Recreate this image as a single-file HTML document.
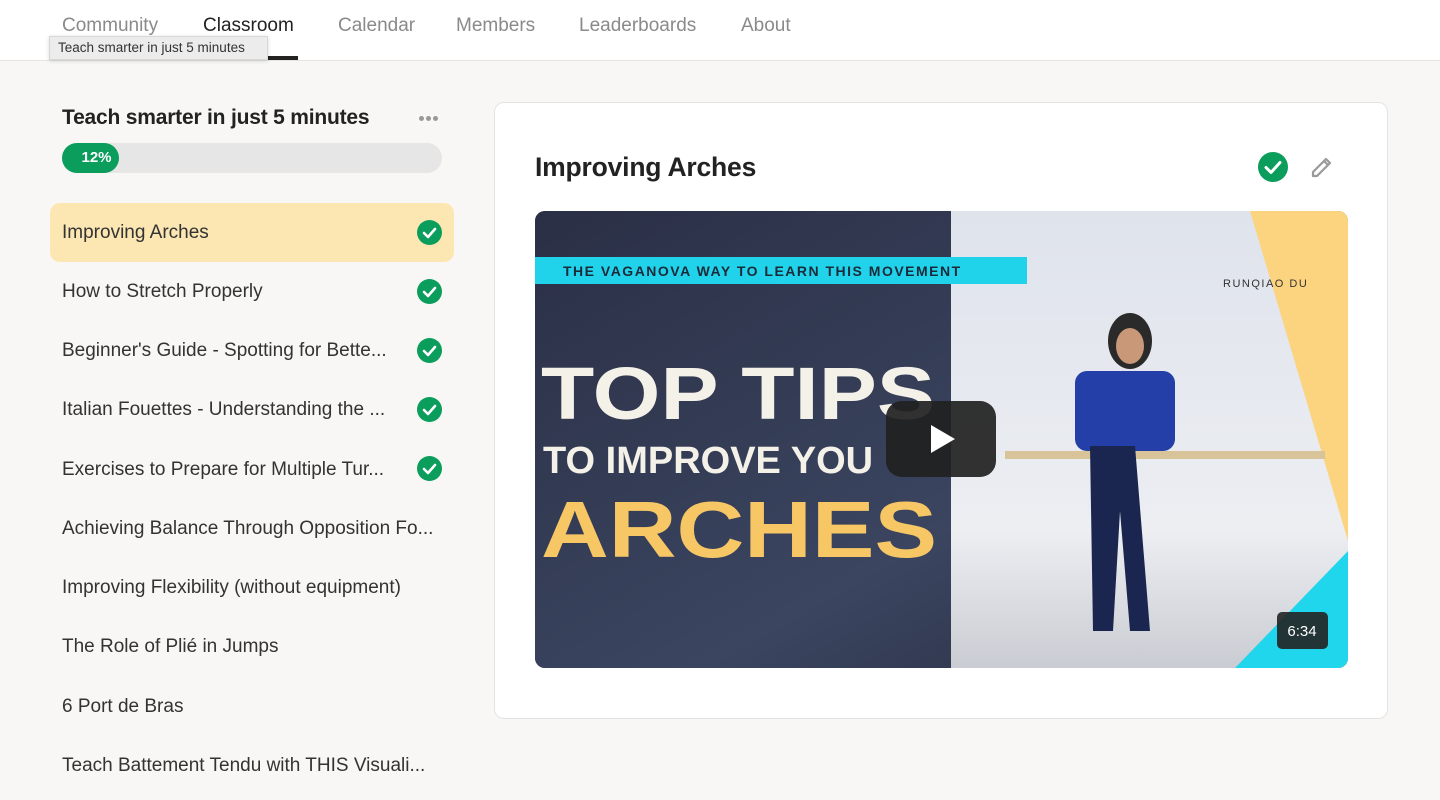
<!DOCTYPE html>
<html><head><meta charset="utf-8"><style>
*{margin:0;padding:0;box-sizing:border-box}
body{width:1440px;height:800px;overflow:hidden;background:#f8f7f5;font-family:"Liberation Sans",Arial,sans-serif;position:relative}
.hdr{position:absolute;left:0;top:0;width:1440px;height:61px;background:#fff;border-bottom:1px solid #e4e4e4}
.nav{position:absolute;top:15px;font-size:19px;color:#8a8a8a}
.tip{position:absolute;left:49px;top:36px;width:219px;height:24px;background:#ececec;border:1px solid #d8d8d8;box-shadow:0 1px 4px rgba(0,0,0,.15);font-size:13.5px;color:#333;padding:3px 0 0 8px;z-index:3}
.under{position:absolute;left:203px;top:56px;width:95px;height:4px;background:#222}
.title{position:absolute;left:62px;top:106px;font-size:21px;font-weight:bold;color:#222;letter-spacing:-0.2px}
.dots{position:absolute;left:419px;top:116px;display:flex;gap:2px}
.dots i{display:block;width:5px;height:5px;border-radius:50%;background:#999}
.bar{position:absolute;left:62px;top:143px;width:380px;height:30px;border-radius:15px;background:#e6e6e6}
.bar div{width:57px;height:30px;border-radius:15px;background:#0a9d5c;color:#fff;font-weight:bold;font-size:15px;text-align:center;line-height:30px;padding-left:12px}
.item{position:absolute;left:50px;width:404px;height:59px;font-size:19px;color:#333;padding-left:12px;line-height:59px}
.item.act{background:#fce7b3;border-radius:10px}
.ck{position:absolute;left:417px;width:25px;height:25px}
.card{position:absolute;left:494px;top:102px;width:894px;height:617px;background:#fff;border:1px solid #e3e3e3;border-radius:10px}
.ct{position:absolute;left:535px;top:152px;font-size:26.5px;font-weight:bold;color:#222;letter-spacing:-0.2px}
.vid{position:absolute;left:535px;top:211px;width:813px;height:457px;border-radius:10px;overflow:hidden;background:#2c3247}
</style></head><body>
<div class="hdr"></div>
<div class="nav" style="left:62px">Community</div>
<div class="nav" style="left:203px;color:#222">Classroom</div>
<div class="nav" style="left:338px">Calendar</div>
<div class="nav" style="left:456px">Members</div>
<div class="nav" style="left:579px">Leaderboards</div>
<div class="nav" style="left:741px">About</div>
<div class="under"></div>
<div class="tip">Teach smarter in just 5 minutes</div>

<div class="title">Teach smarter in just 5 minutes</div>
<div class="dots"><i></i><i></i><i></i></div>
<div class="bar"><div>12%</div></div>

<div class="item act" style="top:203px">Improving Arches</div>
<div class="item" style="top:262px">How to Stretch Properly</div>
<div class="item" style="top:321px">Beginner's Guide - Spotting for Bette...</div>
<div class="item" style="top:380px">Italian Fouettes - Understanding the ...</div>
<div class="item" style="top:440px">Exercises to Prepare for Multiple Tur...</div>
<div class="item" style="top:499px">Achieving Balance Through Opposition Fo...</div>
<div class="item" style="top:558px">Improving Flexibility (without equipment)</div>
<div class="item" style="top:617px">The Role of Plié in Jumps</div>
<div class="item" style="top:677px">6 Port de Bras</div>
<div class="item" style="top:736px">Teach Battement Tendu with THIS Visuali...</div>

<svg class="ck" style="top:220px" viewBox="0 0 25 25"><circle cx="12.5" cy="12.5" r="12.5" fill="#0a9d5c"/><path d="M7 13l4 4 7-8" stroke="#fff" stroke-width="2.6" fill="none" stroke-linecap="round" stroke-linejoin="round"/></svg>
<svg class="ck" style="top:279px" viewBox="0 0 25 25"><circle cx="12.5" cy="12.5" r="12.5" fill="#0a9d5c"/><path d="M7 13l4 4 7-8" stroke="#fff" stroke-width="2.6" fill="none" stroke-linecap="round" stroke-linejoin="round"/></svg>
<svg class="ck" style="top:338px" viewBox="0 0 25 25"><circle cx="12.5" cy="12.5" r="12.5" fill="#0a9d5c"/><path d="M7 13l4 4 7-8" stroke="#fff" stroke-width="2.6" fill="none" stroke-linecap="round" stroke-linejoin="round"/></svg>
<svg class="ck" style="top:397px" viewBox="0 0 25 25"><circle cx="12.5" cy="12.5" r="12.5" fill="#0a9d5c"/><path d="M7 13l4 4 7-8" stroke="#fff" stroke-width="2.6" fill="none" stroke-linecap="round" stroke-linejoin="round"/></svg>
<svg class="ck" style="top:456px" viewBox="0 0 25 25"><circle cx="12.5" cy="12.5" r="12.5" fill="#0a9d5c"/><path d="M7 13l4 4 7-8" stroke="#fff" stroke-width="2.6" fill="none" stroke-linecap="round" stroke-linejoin="round"/></svg>

<div class="card"></div>
<div class="ct">Improving Arches</div>
<svg style="position:absolute;left:1258px;top:152px" width="30" height="30" viewBox="0 0 30 30"><circle cx="15" cy="15" r="15" fill="#0a9d5c"/><path d="M8 15.5l5 5 9-10" stroke="#fff" stroke-width="3" fill="none" stroke-linecap="round" stroke-linejoin="round"/></svg>
<svg style="position:absolute;left:1308px;top:153px" width="28" height="28" viewBox="0 0 28 28"><path d="M5 19L18 6l4 4L9 23H5z M16 8l4 4" stroke="#999" stroke-width="2.2" fill="none" stroke-linejoin="round"/></svg>

<div class="vid">
<svg width="813" height="457" viewBox="0 0 813 457">
<defs><linearGradient id="g" x1="0" y1="0" x2="1" y2="1"><stop offset="0" stop-color="#2a2f45"/><stop offset=".6" stop-color="#3b4560"/><stop offset="1" stop-color="#262a3c"/></linearGradient>
<linearGradient id="r" x1="0" y1="0" x2="0" y2="1"><stop offset="0" stop-color="#dfe3ec"/><stop offset=".7" stop-color="#eceef2"/><stop offset="1" stop-color="#c9ccd2"/></linearGradient></defs>
<rect width="813" height="457" fill="url(#g)"/>
<rect x="416" width="397" height="457" fill="url(#r)"/>
<polygon points="715,0 813,0 813,330" fill="#fcd37e"/>
<polygon points="700,457 813,340 813,457" fill="#1fd6ec"/>
<rect x="0" y="46" width="492" height="27" fill="#21d3ea"/>
<text x="28" y="65" font-family="Liberation Sans" font-weight="bold" font-size="14" fill="#1b2a3a" letter-spacing="1.5">THE VAGANOVA WAY  TO LEARN THIS MOVEMENT</text>
<text x="6" y="208" font-family="Liberation Sans" font-weight="bold" font-size="74" fill="#f4f1e8" textLength="394" lengthAdjust="spacingAndGlyphs">TOP TIPS</text>
<text x="8" y="262" font-family="Liberation Sans" font-weight="bold" font-size="38" fill="#f4f1e8">TO IMPROVE YOU</text>
<text x="6" y="346" font-family="Liberation Sans" font-weight="bold" font-size="80" fill="#f7c766" textLength="396" lengthAdjust="spacingAndGlyphs">ARCHES</text>
<text x="688" y="76" font-family="Liberation Sans" font-size="11" fill="#333" letter-spacing="1.5">RUNQIAO DU</text>
<rect x="470" y="240" width="320" height="8" fill="#d9c49a"/>
<ellipse cx="595" cy="130" rx="22" ry="28" fill="#2a2a2a"/>
<ellipse cx="595" cy="135" rx="14" ry="18" fill="#c89878"/>
<rect x="540" y="160" width="100" height="80" rx="12" fill="#2440a8"/>
<path d="M555 235 L600 235 L615 420 L595 420 L585 300 L578 420 L558 420 Z" fill="#1a2650"/>
<rect x="351" y="190" width="110" height="76" rx="16" fill="#212121" opacity=".92"/>
<path d="M396 214 L396 242 L420 228 Z" fill="#fff"/>
<rect x="742" y="401" width="51" height="37" rx="5" fill="#222" opacity=".9"/>
<text x="767" y="425" text-anchor="middle" font-family="Liberation Sans" font-size="15" fill="#fff">6:34</text>
</svg>
</div>
</body></html>
